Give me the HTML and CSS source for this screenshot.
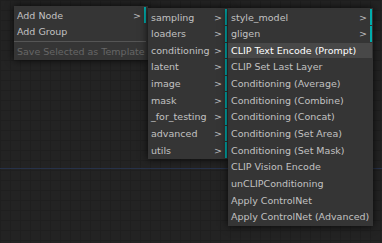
FILE: index.html
```html
<!DOCTYPE html>
<html>
<head>
<meta charset="utf-8">
<link rel="stylesheet" href="styles.css">
</head>
<body>
<div class="canvas">
  <div class="link-line"></div>

  <div class="menu menu-main">
    <div class="entry sub"><span>Add Node</span><span class="arrow">&gt;</span></div>
    <div class="entry"><span>Add Group</span></div>
    <div class="sep"></div>
    <div class="entry disabled"><span>Save Selected as Template</span></div>
  </div>

  <div class="menu menu-cat">
    <div class="entry sub"><span>sampling</span><span class="arrow">&gt;</span></div>
    <div class="entry sub"><span>loaders</span><span class="arrow">&gt;</span></div>
    <div class="entry sub"><span>conditioning</span><span class="arrow">&gt;</span></div>
    <div class="entry sub"><span>latent</span><span class="arrow">&gt;</span></div>
    <div class="entry sub"><span>image</span><span class="arrow">&gt;</span></div>
    <div class="entry sub"><span>mask</span><span class="arrow">&gt;</span></div>
    <div class="entry sub"><span>_for_testing</span><span class="arrow">&gt;</span></div>
    <div class="entry sub"><span>advanced</span><span class="arrow">&gt;</span></div>
    <div class="entry sub"><span>utils</span><span class="arrow">&gt;</span></div>
  </div>

  <div class="menu menu-nodes">
    <div class="entry sub"><span>style_model</span><span class="arrow">&gt;</span></div>
    <div class="entry sub"><span>gligen</span><span class="arrow">&gt;</span></div>
    <div class="entry active"><span>CLIP Text Encode (Prompt)</span></div>
    <div class="entry"><span>CLIP Set Last Layer</span></div>
    <div class="entry"><span>Conditioning (Average)</span></div>
    <div class="entry"><span>Conditioning (Combine)</span></div>
    <div class="entry"><span>Conditioning (Concat)</span></div>
    <div class="entry"><span>Conditioning (Set Area)</span></div>
    <div class="entry"><span>Conditioning (Set Mask)</span></div>
    <div class="entry"><span>CLIP Vision Encode</span></div>
    <div class="entry"><span>unCLIPConditioning</span></div>
    <div class="entry"><span>Apply ControlNet</span></div>
    <div class="entry"><span>Apply ControlNet (Advanced)</span></div>
  </div>
</div>
</body>
</html>
```

FILE: styles.css
```css
html, body {
  margin: 0;
  padding: 0;
}

body {
  width: 382px;
  height: 243px;
  overflow: hidden;
  background: #222;
  font-family: "DejaVu Sans", Verdana, sans-serif;
}

.canvas {
  position: relative;
  width: 382px;
  height: 243px;
  background-color: #232323;
  background-image:
    repeating-linear-gradient(to right, #1f1f1f 0, #1f1f1f 1px, transparent 1px, transparent 10px),
    repeating-linear-gradient(to bottom, #1f1f1f 0, #1f1f1f 1px, transparent 1px, transparent 10px);
}

.link-line {
  position: absolute;
  left: 0;
  right: 0;
  top: 168px;
  height: 1px;
  background: #27324a;
}

.menu {
  position: absolute;
  box-sizing: border-box;
  background: #353535;
  box-shadow: 0 0 8px rgba(0, 0, 0, 0.8);
  padding: 0.7px 1px 0.7px 0;
  display: flex;
  flex-direction: column;
}

.menu-main {
  left: 14px;
  top: 6px;
  width: 134px;
  padding-right: 2px;
}

.menu-cat {
  left: 148px;
  top: 8px;
  width: 80px;
}

.menu-nodes {
  left: 228px;
  top: 8px;
  width: 145px;
}

.entry {
  box-sizing: border-box;
  height: 15.67px;
  margin: 0.5px 0;
  padding: 0 3px 0 3px;
  display: flex;
  align-items: center;
  justify-content: space-between;
  font-size: 9.5px;
  color: #c2c2c2;
  white-space: nowrap;
}

.entry.sub {
  border-right: 2px solid #00adad;
}

.arrow {
  color: #bdbdbd;
  font-size: 9.5px;
}

.entry.disabled {
  color: #666;
}

.entry.active {
  background: #484848;
  color: #ffffff;
}

.sep {
  height: 1px;
  background: #555;
  margin: 1px 0 1px 0;
}
```
